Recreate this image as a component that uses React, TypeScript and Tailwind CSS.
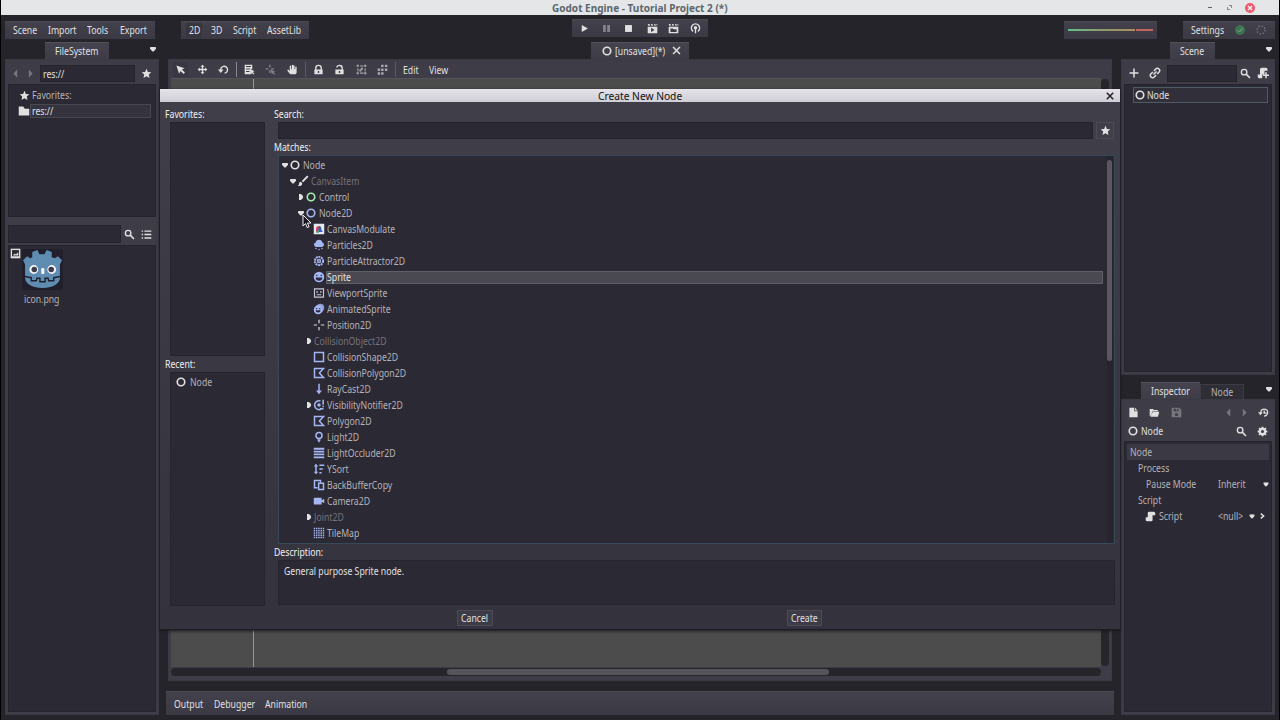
import React from "react";

type IconName = keyof typeof ICONS;

const W = "#e0e0e0";
const B = "#a5b7f3";

/* All glyphs are drawn on a 16-unit grid. */
const ICONS = {
  node: <circle cx="8" cy="8" r="5" fill="none" stroke={W} strokeWidth="2.2" />,
  control: <circle cx="8" cy="8" r="5" fill="none" stroke="#a5efac" strokeWidth="2.2" />,
  node2d: <circle cx="8" cy="8" r="5" fill="none" stroke={B} strokeWidth="2.2" />,
  brush: (
    <g fill={W}>
      <path d="M14.6 1.2c-.6-.5-1.300-.2-1.800.2L6.300 7.900l1.900 1.900 6.500-6.700c.5-.6.5-1.400-.1-1.900z" />
      <path d="M5.400 9c-2 0-2.600 1.300-2.700 2.600C2.600 12.900 2 13.600 1 14.400c2.500.6 6 .3 6-3.200z" />
    </g>
  ),
  play: <path d="M4 3v10l9-5z" fill={W} />,
  pause: <path d="M3 3h4v10H3zM9 3h4v10H9z" fill="#85838b" />,
  stop: <path d="M3 3h10v10H3z" fill={W} />,
  playScene: (
    <g fill={W}>
      <path d="M1 1.500h2.500l1 2.500H2zM5.500 1.500h2.300l1 2.500H6.500zM10 1.500h2l1 2.500h-2zM13.500 1.500H15V4h-.6z" />
      <path fillRule="evenodd" d="M1 5.500h14V14a1 1 0 0 1-1 1H2a1 1 0 0 1-1-1zM6 7v6l5-3z" />
    </g>
  ),
  playCustom: (
    <g fill={W}>
      <path d="M1 1.500h2.500l1 2.500H2zM5.500 1.500h2.300l1 2.500H6.500zM10 1.500h2l1 2.500h-2zM13.500 1.500H15V4h-.6z" />
      <path fillRule="evenodd" d="M1 5.500h14V14a1 1 0 0 1-1 1H2a1 1 0 0 1-1-1zM3.500 8v5h9V9H8L7 8z" />
    </g>
  ),
  remote: (
    <g fill="none" stroke={W} strokeWidth="2">
      <path d="M4.500 12.200A6 6 0 1 1 11.500 12.200" />
      <path d="M8 7v8" />
      <circle cx="8" cy="7" r="1.500" fill={W} />
    </g>
  ),
  select: <path d="M2 2l4 12 2-4 4.500 4.500 2-2L10 8l4-2z" fill={W} />,
  move: <path d="M8 1L5 4h2v3H4V5L1 8l3 3V9h3v3H5l3 3 3-3H9V9h3v2l3-3-3-3v2H9V4h2z" fill={W} />,
  rotate: (
    <g>
      <path d="M4 9.500a5 5 0 1 1 5.500 3.800" fill="none" stroke={W} strokeWidth="2" />
      <path d="M0 8h8L4 13z" fill={W} />
    </g>
  ),
  listSelect: (
    <g fill={W}>
      <path fillRule="evenodd" d="M1 1h11v7l-2-1v8H1zM3 3v1.500h7V3zM3 6.500V8h6V6.500zM3 10v1.500h5V10z" />
      <path d="M8 7l7.500 3.500-2.700 1 2.400 2.400-1.400 1.400-2.400-2.400-1 2.600z" />
    </g>
  ),
  pivot: (
    <g fill="#85838b">
      <path d="M6 1h2v4H6zM1 6h4v2H1zM9 6h4v2H9zM6 9h2v4H6zM8 8l7 2.800-2.800 1L15 14l-1.500 1.500-2.200-2.700-1 2.700z" />
    </g>
  ),
  pan: (
    <path
      d="M8 1a1 1 0 0 0-1 1v5.500H6V3a1 1 0 0 0-2 0v7L2.300 8.400a1.100 1.100 0 0 0-1.700 1.300L4 14c.8.800 1.500 1 2.500 1H11c2 0 3-1.500 3-3V4.500a1 1 0 0 0-2 0v3h-1V2.700a1 1 0 0 0-2 0v4.800V2a1 1 0 0 0-1-1z"
      fill={W}
    />
  ),
  lock: <path fillRule="evenodd" d="M8 1a5 5 0 0 0-5 5v2H2v7h12V8h-1V6a5 5 0 0 0-5-5zm0 2a3 3 0 0 1 3 3v2H5V6a3 3 0 0 1 3-3zM7 10h2v3H7z" fill={W} />,
  unlock: <path fillRule="evenodd" d="M8 1a5 5 0 0 0-4.900 4h2.100A3 3 0 0 1 11 6v2H2v7h12V8h-1V6a5 5 0 0 0-5-5zM7 10h2v3H7z" fill={W} />,
  group: (
    <g fill="#aaa8af">
      <path d="M1 1h3v3H1zM12 1h3v3h-3zM1 12h3v3H1zM12 12h3v3h-3z" />
      <path d="M6 2h5v1.500H6zM2 6h1.500v5H2zM12.500 6H14v5h-1.500zM6 12.500h5V14H6zM7 5.500h3v3H7zM5 8h3v3H5z" />
    </g>
  ),
  ungroup: <path d="M6 1h3.500v3.500H6zM11.500 1H15v3.500h-3.500zM6 6.500h3.500V10H6zM11.500 6.500H15V10h-3.500zM1 6.500h3.500V10H1zM1 12h3.500v3.500H1zM6 12h3.500v3.500H6z" fill="#aaa8af" />,
  star: <path d="M8 1.200l2 4.500 5 .5-3.700 3.300 1.100 5L8 11.900l-4.400 2.600 1.100-5L1 6.200l5-.5z" fill={W} />,
  folder: <path d="M1 2h6l2 3h6v9H1z" fill={W} />,
  search: (
    <g fill="none" stroke={W} strokeWidth="2">
      <circle cx="6" cy="6" r="4" />
      <path d="M9 9l5.500 5.500" strokeWidth="2.400" />
    </g>
  ),
  list: <path d="M1 2h2v2H1zM5 2h10v2H5zM1 7h2v2H1zM5 7h10v2H5zM1 12h2v2H1zM5 12h10v2H5z" fill={W} />,
  add: <path d="M7 2h2v5h5v2H9v5H7V9H2V7h5z" fill={W} />,
  link: (
    <g transform="rotate(-45 8 8)" fill="none" stroke={W} strokeWidth="2">
      <path d="M7 5H3.500a3 3 0 0 0 0 6H7M9 5h3.500a3 3 0 0 1 0 6H9M5 8h6" />
    </g>
  ),
  script: <path d="M6 1a2 2 0 0 0-2 2v6H1v3a2.500 2.500 0 0 0 2.500 3H9a2 2 0 0 0 2-2V6h4V3.500A2.500 2.500 0 0 0 12.500 1z" fill={W} />,
  scriptAdd: (
    <g fill={W}>
      <path d="M6 1a2 2 0 0 0-2 2v7H1v3a2 2 0 0 0 2 2h4v-5h3V5h4V3a2 2 0 0 0-2-2z" />
      <path d="M11 7h2v3h3v2h-3v3h-2v-3H8v-2h3z" />
    </g>
  ),
  file: <path d="M2 1v14h12V6H9V1zM10 1v4h4z" fill={W} />,
  load: <path d="M1 3h5l1 1.500h6V6H5L3 12l-2 1zM5.500 7H15l-2 7H2z" fill={W} />,
  save: <path fillRule="evenodd" d="M1 1h11l3 3v11H1zM4 2.500V6h7V2.500H9V5H7V2.500zM6 9v4h4V9z" fill="#77757d" />,
  back: <path d="M10.500 2v12L5 8z" fill="#77757d" />,
  forward: <path d="M5.500 2v12L11 8z" fill="#77757d" />,
  history: (
    <g>
      <path d="M4 8a5 5 0 1 1 5 5" fill="none" stroke={W} strokeWidth="2" />
      <path d="M0 7.500h7L3.500 12z" fill={W} />
      <path d="M8 5h2v3h2.500v1.800H8z" fill={W} />
    </g>
  ),
  gear: (
    <g>
      <circle cx="8" cy="8" r="3.800" fill="none" stroke={W} strokeWidth="3.200" />
      <g stroke={W} strokeWidth="2.800">
        <path d="M8 1v3M8 12v3M1 8h3M12 8h3M3 3l2 2M11 11l2 2M13 3l-2 2M5 11l-2 2" />
      </g>
    </g>
  ),
  close: <path d="M3 3l10 10M13 3L3 13" fill="none" stroke={W} strokeWidth="2.200" />,
  modulate: (
    <g>
      <path d="M1 1h14v14H1z" fill="#e8e8f0" />
      <path d="M4 12V8a4 4 0 0 1 4-4v8z" fill="#e0405a" />
      <path d="M8 4a3 3 0 0 1 3 4H7z" fill="#2b6f86" />
      <path d="M7 8h4l2 4H7z" fill="#4560d8" />
      <path d="M5 10h3v3H4z" fill="#3fa868" />
    </g>
  ),
  particles: (
    <g fill={B}>
      <path d="M8 1a4.500 4.500 0 0 0-4.400 3.600A3 3 0 0 0 4 10.500h8a3 3 0 0 0 .4-5.900A4.500 4.500 0 0 0 8 1z" />
      <circle cx="4" cy="12.500" r="1" /><circle cx="12" cy="12.500" r="1" /><circle cx="8" cy="14" r="1" />
    </g>
  ),
  attractor: (
    <g fill="none" stroke={B}>
      <circle cx="8" cy="8" r="5.500" strokeWidth="2.600" strokeDasharray="2.600 0.900" />
      <circle cx="8" cy="8" r="2.400" strokeWidth="1.400" />
      <circle cx="8" cy="8" r=".8" fill={B} />
    </g>
  ),
  sprite: (
    <g>
      <circle cx="8" cy="8" r="7" fill={B} />
      <path d="M3.600 8.500h8.800a4.400 4.400 0 0 1-8.800 0z" fill="#2b2a45" />
      <circle cx="5" cy="6" r="1" fill="#2b2a45" /><circle cx="11" cy="6" r="1" fill="#2b2a45" />
    </g>
  ),
  viewportSprite: (
    <g>
      <path d="M2 2.500h12v11H2z" fill="none" stroke="#c5c8dc" strokeWidth="1.500" />
      <path d="M4.500 5.500h2v2h-2zM9.500 5.500h2v2h-2zM5 9.500h6v1.500H5z" fill="#c5c8dc" />
    </g>
  ),
  animatedSprite: (
    <g>
      <circle cx="10" cy="6" r="5" fill="#8d96c8" />
      <circle cx="8.500" cy="7.500" r="5.400" fill="#98a2d8" />
      <circle cx="6.800" cy="9.200" r="5.800" fill={B} />
      <path d="M3.500 9.500h6.600a3.300 3.300 0 0 1-6.600 0z" fill="#2b2a45" />
      <circle cx="4.800" cy="7.500" r=".9" fill="#2b2a45" /><circle cx="9" cy="7.500" r=".9" fill="#2b2a45" />
    </g>
  ),
  position: <path d="M7.200 1h1.600v4.500H7.200zM7.200 10.500h1.600V15H7.200zM1 7.200h4.500v1.600H1zM10.500 7.200H15v1.600h-4.500z" fill="#d5d8ea" />,
  shape: <path d="M2 2h12v12H2z" fill="none" stroke={B} strokeWidth="2" />,
  polygon: <path d="M14 2H2v12h12L8.500 8z" fill="none" stroke={B} strokeWidth="2" />,
  raycast: <path d="M7 1h2v9h3l-4 5-4-5h3z" fill={B} />,
  notifier: (
    <g>
      <path d="M10 2.500A6 6 0 1 0 11 13.500" fill="none" stroke={B} strokeWidth="2" />
      <circle cx="8" cy="8" r="2.300" fill={B} />
      <path d="M12.500 1h2v6.500h-2zM12.500 9h2v2h-2zM9 12h5v2H9z" fill={B} />
    </g>
  ),
  light: (
    <g>
      <circle cx="8" cy="6" r="4" fill="none" stroke={B} strokeWidth="2" />
      <path d="M6 11h4v2H9v2H7v-2H6z" fill={B} />
    </g>
  ),
  occluder: <path d="M1 1h14v2.600H1zM1 5h14v2.200H1zM1 8.800h14V11H1zM1 12.500h14V15H1z" fill={B} />,
  ysort: <path d="M4 1L1 4.500h2v7H1L4 15l3-3.500H5v-7h2zM8.500 2H15v2H8.500zM8.500 7H13v2H8.500zM8.500 12h3v2h-3z" fill={B} />,
  buffer: (
    <g fill="none" stroke={B} strokeWidth="2">
      <path d="M6 11.500H2V2h8v3" />
      <path d="M7.500 5.500h6.500V14H7.500z" />
    </g>
  ),
  camera: <path d="M2 3.500h8.500a1 1 0 0 1 1 1V7L15 5v6l-3.500-2v3.500H2a1 1 0 0 1-1-1v-7a1 1 0 0 1 1-1z" fill={B} />,
  tilemap: (
    <g fill={B}>
      {[0, 1, 2, 3, 4].map((r) => [0, 1, 2, 3, 4].map((c) => <rect key={`${r}${c}`} x={1 + c * 3} y={1 + r * 3} width="1.900" height="1.900" />))}
    </g>
  ),
  image: (
    <g>
      <path d="M1 1h14v14H1z" fill={W} />
      <path d="M3 3h10v9H3z" fill="#2b2933" />
      <path d="M4 11l3-3 1.500 1.500L12 6v5z" fill={W} />
    </g>
  ),
} satisfies Record<string, React.ReactNode>;

function Icon({ name, className = "size-3" }: { name: IconName; className?: string }) {
  return (
    <svg viewBox="0 0 16 16" className={`block shrink-0 ${className}`}>
      {ICONS[name]}
    </svg>
  );
}

function T({ children, className = "" }: { children: React.ReactNode; className?: string }) {
  return (
    <span className={`block w-max origin-left scale-x-[0.87] text-[10px] leading-3 whitespace-nowrap ${className}`}>
      {children}
    </span>
  );
}

/* Fixed-width cell that holds one label. */
function Cell({ w, children, className = "" }: { w: string; children: React.ReactNode; className?: string }) {
  return (
    <div className={`flex shrink-0 items-center ${w}`}>
      <T className={className}>{children}</T>
    </div>
  );
}

function Down({ className = "" }: { className?: string }) {
  return (
    <svg viewBox="0 0 6 5" className={`block h-[5px] w-[6px] shrink-0 ${className}`}>
      <path d="M.6 0h4.800l.6.600v1.200L3.600 4.600H2.400L0 1.800V.6z" fill={W} />
    </svg>
  );
}

function Right() {
  return (
    <svg viewBox="0 0 4 6" className="block h-[6px] w-1 shrink-0">
      <path d="M0 0h2l2 2v2L2 6H0z" fill={W} />
    </svg>
  );
}

const bar = "bg-linear-to-b from-[#43414b] to-[#3b3944] shadow-[inset_0_1px_0_#4a4852]";
const inset = "bg-[#2b2933] border border-[#25232c]";
const tab = "bg-linear-to-b from-[#45434d] to-[#3e3c46] shadow-[inset_0_1px_0_#52505a]";

function FileSystemDock() {
  return (
    <div className="ml-1 w-[154px] shrink-0">
      <div className="flex h-[17px] items-stretch pl-10">
        <div className={`flex w-16 items-center pl-[10px] ${tab}`}><T>FileSystem</T></div>
        <Down className="mt-[5px] ml-[41px]" />
      </div>
      <div className="flex h-[656px] flex-col border border-[#3b3943] bg-[#3e3c46] px-[2px] pt-[5px] pb-[2px]">
        <div className="flex h-[17px] shrink-0 items-center pl-[2px]">
          <Icon name="back" className="size-[11px]" />
          <Icon name="forward" className="ml-[4px] size-[11px]" />
          <div className={`ml-[4px] flex h-[17px] w-[95px] items-center pl-[2px] ${inset}`}><T>res://</T></div>
          <Icon name="star" className="ml-[6px] size-[11px]" />
        </div>
        <div className={`mt-[2px] h-[133px] shrink-0 pt-[2px] ${inset}`}>
          <div className="flex h-4 items-center pl-[10px]">
            <Icon name="star" className="size-[11px]" />
            <T className="ml-[2px] text-[#b5b3ba]">Favorites:</T>
          </div>
          <div className="flex h-4 items-center pl-[9px]">
            <Icon name="folder" className="size-3" />
            <div className="flex h-[14px] w-[121px] items-center border border-[#494751] bg-[#35333d] pl-[1px]"><T>res://</T></div>
          </div>
        </div>
        <div className="mt-2 flex h-[18px] shrink-0 items-center">
          <div className={`h-[18px] w-[113px] ${inset}`} />
          <Icon name="search" className="ml-[3px] size-[11px]" />
          <Icon name="list" className="ml-[6px] size-[11px]" />
        </div>
        <div className={`mt-[2px] grow ${inset}`}>
          <div className="flex pt-[3px] pl-px">
            <Icon name="image" className="-mt-px size-[11px]" />
            <div className="-ml-px w-11">
              <svg viewBox="0 0 40 40" className="ml-[2px] block size-[41px]">
                <rect width="40" height="40" rx="3" fill="#211f2b" />
                <path d="M10 3l5-2 2 4h5l2-4 5 2v5l3 1 3-2 4 4-2 4v13c0 6-8 10-17 10S3 34 3 28V15L1 11l4-4 3 2 2-1z" fill="#5f8db2" />
                <path d="M1 26.500l8 1.500v3h5l.5-2.500h3V32h5v-3.500h3l.5 2.500h5v-3l8-1.500" fill="none" stroke="#211f2b" strokeWidth="1.400" />
                <circle cx="11.500" cy="20" r="4.300" fill="#f4f4f8" /><circle cx="29" cy="20" r="4.300" fill="#f4f4f8" />
                <circle cx="12" cy="20" r="2.700" fill="#3d3b4a" /><circle cx="28.500" cy="20" r="2.700" fill="#3d3b4a" />
                <rect x="18.800" y="18.500" width="3" height="6" rx="1.200" fill="#f4f4f8" />
              </svg>
              <T className="mt-[3px] ml-[3.500px] text-[#b5b3ba]">icon.png</T>
            </div>
          </div>
        </div>
      </div>
    </div>
  );
}

const Sep = ({ className = "bg-[#5b5963]" }: { className?: string }) => <div className={`h-[15px] w-px shrink-0 ${className}`} />;

function Viewport() {
  return (
    <div className="ml-[7px] w-[948px] shrink-0">
      <div className="flex h-[17px] pl-[425px]">
        <div className={`flex w-[98px] items-center pl-[10px] ${tab}`}>
          <Icon name="node" className="size-3" />
          <Cell w="w-[58px] pl-[1.5px]">[unsaved](*)</Cell>
          <Icon name="close" className="-mt-px size-[11px]" />
        </div>
      </div>
      <div className="ml-[2px] flex h-[622px] w-[944px] flex-col border border-[#3b3943] bg-[#3e3c46] px-[2px]">
        <div className="flex h-[18px] shrink-0 items-center pt-px pl-[2px]">
          <div className="flex size-[15px] items-center justify-center bg-[#393741]"><Icon name="select" className="size-[11px]" /></div>
          <Icon name="move" className="ml-[8.5px] size-[11px]" />
          <Icon name="rotate" className="ml-[10.5px] size-[11px]" />
          <Sep className="ml-[7px] bg-[#8a8890]" />
          <Icon name="listSelect" className="ml-[6.5px] size-[11px]" />
          <Icon name="pivot" className="ml-[10.5px] size-[11px]" />
          <Icon name="pan" className="ml-[11px] size-[11px]" />
          <Sep className="ml-[6.5px] bg-[#5b5963]" />
          <Icon name="lock" className="ml-[7px] size-[11px]" />
          <Icon name="unlock" className="ml-[10px] size-[11px]" />
          <Icon name="group" className="ml-[11px] size-[11px]" />
          <Icon name="ungroup" className="ml-[10px] size-[11px]" />
          <Sep className="ml-[7px] bg-[#5b5963]" />
          <Cell w="w-[33.5px] pl-[7.5px]">Edit</Cell>
          <Cell w="w-[34px]">View</Cell>
        </div>
        <div className="flex h-[589px] shrink-0">
          <div className="w-[930px] border-t border-[#55535a] bg-[#4c4c4c]">
            <div className="ml-[82px] h-full w-px bg-[#74b076]" />
          </div>
          <div className="my-px w-2 rounded-full bg-[#26252a]" />
        </div>
        <div className="mt-px flex h-[8px] w-[930px] shrink-0 rounded-full bg-[#26252a] pl-[276px]">
          <div className="my-px h-[6px] w-[382px] rounded-sm bg-[#56545b]" />
        </div>
      </div>
      <div className={`mt-[10px] flex h-6 items-center pt-px pl-[7.5px] ${bar}`}>
        <Cell w="w-10">Output</Cell>
        <Cell w="w-[51px]">Debugger</Cell>
        <Cell w="w-[50px]">Animation</Cell>
      </div>
    </div>
  );
}

function RightDocks() {
  return (
    <div className="ml-[6px] w-[156px] shrink-0">
      <div className="flex h-[17px] pl-[50px]">
        <div className={`flex w-[45px] items-center pl-[10px] ${tab}`}><T>Scene</T></div>
        <Down className="mt-[5px] ml-[51px]" />
      </div>
      <div className="ml-px flex h-[316px] w-[154px] flex-col border border-[#3b3943] bg-[#3e3c46] px-[2px] pt-[4px] pb-[2px]">
        <div className="flex h-[18px] shrink-0 items-center pl-[3.5px]">
          <Icon name="add" className="size-3" />
          <Icon name="link" className="ml-[9px] size-3" />
          <div className={`ml-[6px] h-[17px] w-[70px] ${inset}`} />
          <Icon name="search" className="ml-[3px] size-[11px]" />
          <Icon name="scriptAdd" className="ml-[6px] size-3" />
        </div>
        <div className={`mt-[2px] grow pt-[2px] pl-[8px] ${inset}`}>
          <div className="flex h-4 w-[135px] items-center border border-[#4e5b66] bg-[#31303a]">
            <Icon name="node" className="size-3" />
            <T className="ml-[1px]">Node</T>
          </div>
        </div>
      </div>
      <div className="mt-[7px] flex h-[17px] pl-[21px]">
        <div className={`flex w-[59px] items-center pl-[10px] ${tab}`}><T>Inspector</T></div>
        <div className="mt-[2px] flex w-[44px] items-center border border-b-0 border-[#3d3b44] bg-[#2f2d36] pl-[10px]"><T className="text-[#b5b3ba]">Node</T></div>
        <Down className="mt-[5px] ml-[22px]" />
      </div>
      <div className="ml-px flex h-[316px] w-[154px] flex-col border border-[#3b3943] bg-[#3e3c46] px-[2px] pt-[3px] pb-[2px]">
        <div className="flex h-[18px] shrink-0 items-center pl-1">
          <Icon name="file" className="size-[11px]" />
          <Icon name="load" className="ml-[10px] size-[11px]" />
          <Icon name="save" className="ml-[11px] size-[11px]" />
          <Icon name="back" className="ml-[41px] size-[11px]" />
          <Icon name="forward" className="ml-[5px] size-[11px]" />
          <Icon name="history" className="ml-[8px] size-[11px]" />
        </div>
        <div className="flex h-[20px] shrink-0 items-center pl-[2.5px]">
          <Icon name="node" className="size-3" />
          <Cell w="w-[97px] pl-[2.500px]">Node</Cell>
          <Icon name="search" className="size-[11px]" />
          <Icon name="gear" className="ml-[10px] size-[11px]" />
        </div>
        <div className={`grow pt-[2px] pl-[2px] text-[#b5b3ba] ${inset}`}>
          <div className="flex h-4 w-[142px] items-center bg-[#3b3943] pl-[2.5px]"><T>Node</T></div>
          <div className="flex h-4 items-center pl-[10.5px]"><T>Process</T></div>
          <div className="flex h-4 items-center pl-[18.5px]">
            <Cell w="w-[72px]">Pause Mode</Cell>
            <Cell w="w-[45px]">Inherit</Cell>
            <Down className="scale-90" />
          </div>
          <div className="flex h-4 items-center pl-[10.5px]"><T>Script</T></div>
          <div className="flex h-4 items-center pl-[18px]">
            <Icon name="script" className="size-[11px]" />
            <Cell w="w-[62px] pl-[2.5px]">Script</Cell>
            <Cell w="w-[31px]">&lt;null&gt;</Cell>
            <Down className="scale-90" />
            <svg viewBox="0 0 5 6" className="ml-[5px] block h-[6px] w-[5px]"><path d="M.8.700L3.600 3 .8 5.300" fill="none" stroke={W} strokeWidth="1.500" /></svg>
          </div>
        </div>
      </div>
    </div>
  );
}

interface Row { label: string; level: number; icon?: IconName; arrow?: "down" | "right"; dim?: boolean; selected?: boolean }

const rows: Row[] = [
  { label: "Node", level: 0, icon: "node", arrow: "down" },
  { label: "CanvasItem", level: 1, icon: "brush", arrow: "down", dim: true },
  { label: "Control", level: 2, icon: "control", arrow: "right" },
  { label: "Node2D", level: 2, icon: "node2d", arrow: "down" },
  { label: "CanvasModulate", level: 3, icon: "modulate" },
  { label: "Particles2D", level: 3, icon: "particles" },
  { label: "ParticleAttractor2D", level: 3, icon: "attractor" },
  { label: "Sprite", level: 3, icon: "sprite", selected: true },
  { label: "ViewportSprite", level: 3, icon: "viewportSprite" },
  { label: "AnimatedSprite", level: 3, icon: "animatedSprite" },
  { label: "Position2D", level: 3, icon: "position" },
  { label: "CollisionObject2D", level: 3, arrow: "right", dim: true },
  { label: "CollisionShape2D", level: 3, icon: "shape" },
  { label: "CollisionPolygon2D", level: 3, icon: "polygon" },
  { label: "RayCast2D", level: 3, icon: "raycast" },
  { label: "VisibilityNotifier2D", level: 3, icon: "notifier", arrow: "right" },
  { label: "Polygon2D", level: 3, icon: "polygon" },
  { label: "Light2D", level: 3, icon: "light" },
  { label: "LightOccluder2D", level: 3, icon: "occluder" },
  { label: "YSort", level: 3, icon: "ysort" },
  { label: "BackBufferCopy", level: 3, icon: "buffer" },
  { label: "Camera2D", level: 3, icon: "camera" },
  { label: "Joint2D", level: 3, arrow: "right", dim: true },
  { label: "TileMap", level: 3, icon: "tilemap" },
];

const indent = ["pl-[1.5px]", "pl-[9.5px]", "pl-[17.5px]", "pl-[25.5px]"];

function TreeRow({ row }: { row: Row }) {
  return (
    <div className={`flex h-4 items-center ${indent[row.level]}`}>
      <div className="flex w-2 shrink-0 justify-center">
        {row.arrow === "down" && <Down />}
        {row.arrow === "right" && <Right />}
      </div>
      {row.icon && <Icon name={row.icon} className="mr-px size-3" />}
      <div
        className={`flex items-center ${
          row.selected ? "h-[13px] w-[777px] border border-[#605e67] bg-[#4a4851] text-[#e4e4e6]" : `pl-px ${row.dim ? "text-[#75737a]" : "text-[#b5b3ba]"}`
        }`}
      >
        <T>{row.label}</T>
      </div>
    </div>
  );
}

function CreateDialog() {
  return (
    <div className="absolute top-[89px] left-[159px] flex h-[541px] w-[960px] flex-col border-b border-[#1d1c22] shadow-[0_1px_3px_#18171c]">
      <div className="flex h-[13px] shrink-0 items-center bg-linear-to-b from-[#e6e4ea] to-[#cfcdd6] pl-[438px] text-[#111]">
        <div className="flex h-[13px] w-[508px] items-center">
          <span className="block w-max origin-left scale-x-[0.93] text-[11px] leading-[13px] whitespace-nowrap">Create New Node</span>
        </div>
        <svg viewBox="0 0 8 8" className="block size-2"><path d="M.8.800l6.400 6.400M7.200.800L.8 7.200" stroke="#222" strokeWidth="1.500" /></svg>
      </div>
      <div className="flex grow bg-linear-to-b from-[#403e48] to-[#34323d]">
        <div className="w-[114px] shrink-0 pl-[5px]">
          <div className="flex h-5 items-center pt-[3px]"><T className="text-[#f0f0f2]">Favorites:</T></div>
          <div className={`ml-[5px] h-[234px] w-[95px] ${inset}`} />
          <div className="flex h-4 items-center"><T className="text-[#f0f0f2]">Recent:</T></div>
          <div className={`ml-[5px] h-[234px] w-[95px] pt-px pl-[4px] ${inset}`}>
            <div className="flex h-4 items-center">
              <Icon name="node" className="size-3" />
              <T className="ml-[2.5px] text-[#b5b3ba]">Node</T>
            </div>
          </div>
        </div>
        <div className="flex grow flex-col">
          <div className="flex h-5 items-center pt-[3px]"><T className="text-[#f0f0f2]">Search:</T></div>
          <div className="flex h-[17px] items-center pl-[4px]">
            <div className={`h-[17px] w-[815px] ${inset}`} />
            <div className="ml-[3px] flex h-[17px] w-[18px] items-center justify-center border border-[#4c4a54] bg-[#403e48]">
              <Icon name="star" className="size-[11px]" />
            </div>
          </div>
          <div className="flex h-4 items-center"><T className="text-[#f0f0f2]">Matches:</T></div>
          <div className="ml-[4px] flex h-[389px] w-[837px] border border-[#38495a] bg-[#2b2933]">
            <div className="w-[828px] pt-[1px]">
              {rows.map((r) => <TreeRow key={r.label} row={r} />)}
            </div>
            <div className="w-[6px] bg-[#26252c] pt-1">
              <div className="h-[201px] w-[5px] rounded-sm bg-[#595760]" />
            </div>
          </div>
          <div className="flex h-4 items-center pb-px"><T className="text-[#f0f0f2]">Description:</T></div>
          <div className={`ml-[4px] h-[45px] w-[837px] pt-1 pl-[5px] ${inset}`}>
            <T className="text-[#e0e0e2]">General purpose Sprite node.</T>
          </div>
          <div className="flex pt-[5px] pl-[183px]">
            <div className="flex h-4 w-[36px] items-center border border-[#4c4a54] bg-[#3d3b45] pl-[3px]"><T>Cancel</T></div>
            <div className="ml-[294px] flex h-4 w-[35px] items-center border border-[#4c4a54] bg-[#3d3b45] pl-[2.5px]"><T>Create</T></div>
          </div>
        </div>
      </div>
    </div>
  );
}

export default function App() {
  return (
    <div className="relative h-[720px] w-[1280px] overflow-hidden border-x border-black bg-[#25242a] font-['Noto_Sans','Open_Sans',sans-serif] text-[#e0e0e2]">
      <div className="flex h-[15px] items-center bg-[#e4e6e8] text-[#5c676c]">
        <div className="w-[551px]" />
        <div className="w-[656px] text-[10px] leading-3 font-bold tracking-[0.02px] whitespace-nowrap">Godot Engine - Tutorial Project 2 (*)</div>
        <div className="h-px w-[4px] bg-[#5c676c]" />
        <svg viewBox="0 0 6 6" className="ml-[15px] block size-[5px]"><path d="M2.500.500h3v3M.5 2.500v3h3" fill="none" stroke="#5c676c" /></svg>
        <svg viewBox="0 0 10 10" className="ml-[13px] block size-[10px]"><circle cx="5" cy="5" r="5" fill="#ee5a6c" /><path d="M3 3l4 4M7 3L3 7" stroke="#fff" strokeWidth="1.300" /></svg>
      </div>
      <div className="flex h-[27px] items-start pt-[4px] pl-1">
        <div className={`mt-[2px] flex h-[18px] w-[150px] items-center pl-2 ${bar}`}>
          <Cell w="w-[35px]">Scene</Cell>
          <Cell w="w-[39px]">Import</Cell>
          <Cell w="w-[33px]">Tools</Cell>
          <Cell w="w-[30px]">Export</Cell>
        </div>
        <div className={`mt-[2px] ml-[26px] flex h-[18px] w-[128px] items-center pl-[5px] ${bar}`}>
          <div className="flex h-[15px] w-4 shrink-0 items-center bg-[#37353e] pl-[3px]"><T>2D</T></div>
          <Cell w="w-[31px] pl-[9px]">3D</Cell>
          <Cell w="w-[34px]">Script</Cell>
          <Cell w="w-[40px]">AssetLib</Cell>
        </div>
        <div className={`ml-[263px] flex h-[18px] w-[136px] items-center pl-[7px] ${bar}`}>
          <Icon name="play" className="size-[11px]" />
          <Icon name="pause" className="ml-[11px] size-[11px]" />
          <Icon name="stop" className="ml-[10.5px] size-[11px]" />
          <Icon name="playScene" className="ml-[13px] size-[11px]" />
          <Icon name="playCustom" className="ml-[10.5px] size-[11px]" />
          <Icon name="remote" className="ml-[10.5px] size-[11px]" />
        </div>
        <div className={`mt-[2px] ml-[356px] flex h-[18px] w-[93px] items-center gap-px pl-1 ${bar}`}>
          <div className="h-[2px] w-[67px] bg-linear-to-r from-[#5fbf8c] via-[#8d9a6a] to-[#ad8a62]" />
          <div className="h-[2px] w-[17px] bg-[#c4645f]" />
        </div>
        <div className={`mt-[2px] ml-[26px] flex h-[18px] w-[92px] items-center pl-[8px] ${bar}`}>
          <Cell w="w-[44px]">Settings</Cell>
          <svg viewBox="0 0 10 10" className="block size-[10px]"><circle cx="5" cy="5" r="5" fill="#3d7350" /><path d="M2.500 5l2 2 3-4" fill="none" stroke="#7fa888" /></svg>
          <svg viewBox="0 0 10 10" className="ml-[11px] block size-[10px]"><circle cx="5" cy="5" r="4" fill="none" stroke="#807e86" strokeWidth="1.300" strokeDasharray="1.300 1.840" /></svg>
        </div>
      </div>
      <div className="flex">
        <FileSystemDock />
        <Viewport />
        <RightDocks />
      </div>
      <CreateDialog />
      <svg viewBox="0 0 10 15" className="absolute top-[214px] left-[301px] block h-[15px] w-[10px]">
        <path d="M1 1v11l2.600-2.400L5.200 13.600l1.900-.8-1.700-3.800H9z" fill="#17161c" stroke="#f2f2f4" strokeWidth="1" />
      </svg>
    </div>
  );
}
